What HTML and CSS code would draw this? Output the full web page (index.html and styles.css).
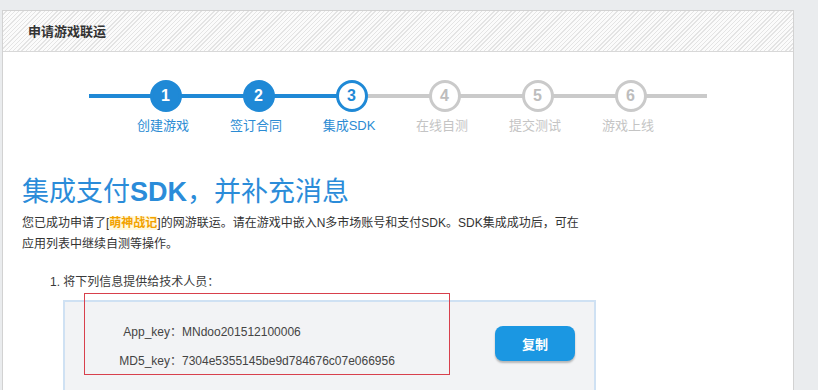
FILE: index.html
```html
<!DOCTYPE html>
<html lang="zh-CN">
<head>
  <meta charset="UTF-8" />
  <title>申请游戏联运</title>
  <link rel="stylesheet" href="styles.css">
</head>
<body>
  <div class="panel">
    <header class="panel-head">申请游戏联运</header>
    <div class="panel-body">
      <div class="steps">
        <div class="step done"><span class="num">1</span><span class="name">创建游戏</span></div>
        <div class="step done"><span class="num">2</span><span class="name">签订合同</span></div>
        <div class="step current"><span class="num">3</span><span class="name">集成SDK</span></div>
        <div class="step"><span class="num">4</span><span class="name">在线自测</span></div>
        <div class="step"><span class="num">5</span><span class="name">提交测试</span></div>
        <div class="step"><span class="num">6</span><span class="name">游戏上线</span></div>
      </div>

      <h1 class="title">集成支付<b>SDK</b>，并补充消息</h1>
      <p class="intro">您已成功申请了[<span class="game">萌神战记</span>]的网游联运。请在游戏中嵌入N多市场账号和支付SDK。SDK集成成功后，可在<br>应用列表中继续自测等操作。</p>

      <div class="task">
        <p class="task-title">1. 将下列信息提供给技术人员：</p>
        <div class="key-box">
          <dl class="keys">
            <dt>App_key：</dt><dd>MNdoo201512100006</dd>
            <dt>MD5_key：</dt><dd>7304e5355145be9d784676c07e066956</dd>
          </dl>
          <button class="copy-btn">复制</button>
        </div>
        <div class="mark"></div>
      </div>
    </div>
  </div>
</body>
</html>
```

FILE: styles.css
```css
:root {
  --blue: #1f89d6;
  --blue-text: #2b8bd3;
  --gray-line: #cacaca;
  --gray-text: #c4c4c4;
  --text: #3a3a3a;
}
body {
  margin: 0;
  background: #eaecee;
  font-family: 'Liberation Sans', 'Noto Sans CJK SC', sans-serif;
  color: var(--text);
  overflow: hidden;
}
.panel {
  margin: 10px 0 0 2px;
  width: 790px;
  min-height: 420px;
  background: #fff;
  border: 1px solid #d2d2d2;
}
.panel-head {
  height: 40px;
  line-height: 42px;
  padding-left: 25px;
  font-size: 13px;
  font-weight: 700;
  color: #333;
  border-bottom: 1px solid #d8d8d8;
  background: repeating-linear-gradient(135deg, #fbfbfb 0 2px, #e4e4e4 2px 3px);
}
.panel-body {
  padding: 0 0 0 19px;
}

/* steps */
.steps {
  display: flex;
  margin: 28px 0 0 67px;
  padding: 0 0 0 30px;
  width: 588px;
  background: linear-gradient(to right, var(--blue) 261px, var(--gray-line) 261px) 0 14px / 100% 4px no-repeat;
}
.step {
  width: 93px;
  display: flex;
  flex-direction: column;
  align-items: center;
}
.step .num {
  box-sizing: border-box;
  width: 32px;
  height: 32px;
  border-radius: 50%;
  border: 3px solid var(--gray-line);
  background: #fff;
  color: #bdbdbd;
  font-size: 16px;
  font-weight: 700;
  line-height: 26px;
  text-align: center;
}
.step .name {
  margin: 5px 5px 0 0;
  font-size: 13px;
  line-height: 18px;
  color: var(--gray-text);
}
.step.done .num {
  background: var(--blue);
  border-color: var(--blue);
  color: #fff;
}
.step.current .num {
  border-color: var(--blue);
  color: var(--blue);
}
.step.done .name, .step.current .name { color: var(--blue-text); }

/* heading + intro */
.title {
  margin: 40px 0 0;
  font-size: 27px;
  line-height: 34px;
  font-weight: 400;
  color: #2b8cd9;
}
.title b { font-weight: 700; }
.intro {
  margin: 4px 0 0;
  font-size: 12px;
  line-height: 21px;
  color: #333;
}
.game {
  color: #f2a200;
  font-weight: 700;
  background: #fff8dc;
}

/* keys */
.task {
  position: relative;
  margin-top: 18px;
}
.task-title {
  margin: 0 0 0 28px;
  font-size: 12px;
  line-height: 18px;
}
.key-box {
  display: flex;
  align-items: flex-start;
  margin: 9px 0 0 41px;
  width: 529px;
  padding: 21px 0 40px;
  background: #f2f3f5;
  border: 2px solid #cfe1f3;
  border-bottom: none;
}
.keys {
  display: grid;
  grid-template-columns: 117px auto;
  row-gap: 11px;
  margin: 0;
  font-size: 12px;
  line-height: 18px;
  color: #444;
}
.keys dt { text-align: right; }
.keys dd { margin: 0; }
.copy-btn {
  margin: 3px 19px 0 auto;
  width: 80px;
  height: 35px;
  border: none;
  border-radius: 8px;
  background: #1b97e2;
  color: #fff;
  font-family: inherit;
  font-size: 13px;
  font-weight: 700;
  box-shadow: 0 2px 2px rgba(0, 0, 0, 0.25);
}
.mark {
  position: absolute;
  left: 62px;
  top: 20px;
  width: 364px;
  height: 80px;
  border: 1px solid #d8404c;
}
```
